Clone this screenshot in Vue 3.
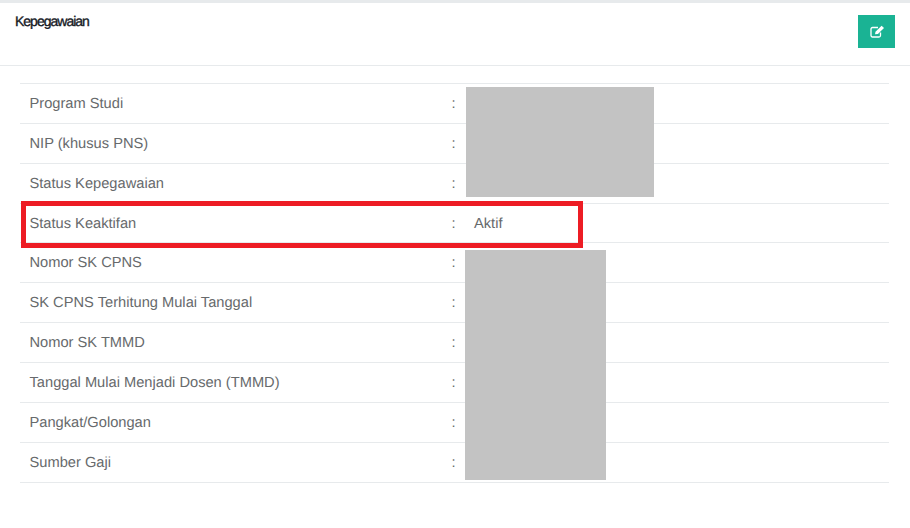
<script setup>
const rows = [
  { label: 'Program Studi', value: '' },
  { label: 'NIP (khusus PNS)', value: '' },
  { label: 'Status Kepegawaian', value: '' },
  { label: 'Status Keaktifan', value: 'Aktif', short: true },
  { label: 'Nomor SK CPNS', value: '' },
  { label: 'SK CPNS Terhitung Mulai Tanggal', value: '' },
  { label: 'Nomor SK TMMD', value: '' },
  { label: 'Tanggal Mulai Menjadi Dosen (TMMD)', value: '' },
  { label: 'Pangkat/Golongan', value: '' },
  { label: 'Sumber Gaji', value: '' }
]
</script>

<template>
  <div class="panel">
    <header class="head">
      <h5 class="title">Kepegawaian</h5>
      <button class="edit" type="button" aria-label="Edit">
        <svg width="15" height="13" viewBox="0 0 15 13" fill="none">
          <path d="M10.500 7.500V10.500a1.500 1.500 0 0 1-1.500 1.500H2.500A1.500 1.500 0 0 1 1 10.500V4a1.500 1.500 0 0 1 1.500-1.500H8" stroke="#fff" stroke-width="1.300" />
          <path d="M5 9.300 5.500 6.800 11.600 .7 14 3 7.900 9 Z" fill="#fff" />
        </svg>
      </button>
    </header>
    <div class="content">
      <div class="table">
        <div v-for="row in rows" :key="row.label" class="row" :class="{ short: row.short }">
          <span class="label">{{ row.label }}</span>
          <span class="colon">:</span>
          <span class="value">{{ row.value }}</span>
        </div>
      </div>
      <div class="redact redact-top"></div>
      <div class="redact redact-bottom"></div>
      <div class="highlight"></div>
    </div>
  </div>
</template>

<style scoped>
.panel {
  width: 910px;
  height: 528px;
  background: #fff;
  border-top: 3px solid #e7eaec;
  box-sizing: border-box;
  font-family: "Liberation Sans", Arial, sans-serif;
  font-size: 14.67px;
  text-rendering: geometricPrecision;
  color: #676a6c;
  overflow: hidden;
}
.head {
  height: 63px;
  box-sizing: border-box;
  border-bottom: 1px solid #e7eaec;
  display: flex;
  align-items: flex-start;
  justify-content: space-between;
  padding: 12px 15px 0 15px;
}
.title {
  margin: -1px 0 0;
  font-size: 14px;
  line-height: 14px;
  font-weight: 400;
  color: #15191f;
  -webkit-text-stroke: 0.35px #15191f;
  letter-spacing: -1px;
}
.edit {
  width: 37px;
  height: 33px;
  border: 0;
  padding: 0 0 0 1px;
  background: #1ab394;
  display: flex;
  align-items: center;
  justify-content: center;
}
.content {
  position: relative;
  padding: 17px 21px 0 20px;
}
.table {
  border-top: 1px solid #e7eaec;
}
.row {
  display: flex;
  align-items: center;
  height: 40px;
  box-sizing: border-box;
  border-bottom: 1px solid #e7eaec;
  padding-left: 9.500px;
}
.row.short {
  height: 39px;
  padding-top: 1px;
}
.label {
  width: 422px;
}
.colon {
  width: 22.500px;
}
.redact {
  position: absolute;
  background: #c3c3c3;
}
.redact-top {
  left: 466px;
  top: 21px;
  width: 188px;
  height: 110px;
}
.redact-bottom {
  left: 465px;
  top: 184px;
  width: 141px;
  height: 230px;
}
.highlight {
  position: absolute;
  left: 21px;
  top: 135px;
  width: 562px;
  height: 47px;
  box-sizing: border-box;
  border: 5px solid #ed1c24;
}
</style>
